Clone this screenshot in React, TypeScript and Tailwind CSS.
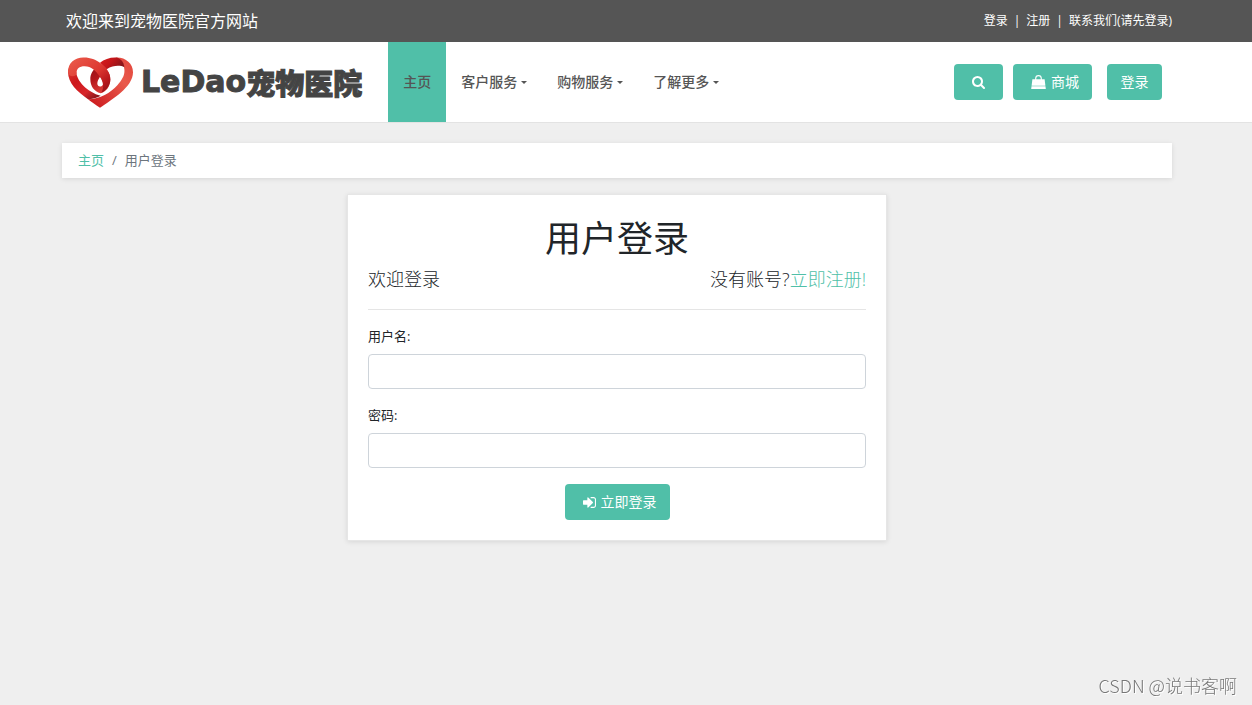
import React, { useState } from "react";

const topLinks = ["登录", "注册", "联系我们(请先登录)"];
const menus = ["客户服务", "购物服务", "了解更多"];

function HeartLogo() {
	return (
		<svg viewBox="24 20 195 152" className="w-[65px] h-[51px]" aria-hidden="true">
			<defs>
				<linearGradient id="left" x1="0" y1="0" x2="0.8" y2="1">
					<stop offset="0" stopColor="#d93a33" />
					<stop offset="0.4" stopColor="#cd171b" />
					<stop offset="0.75" stopColor="#d8262a" />
					<stop offset="1" stopColor="#8b141a" />
				</linearGradient>
				<linearGradient id="right" x1="1" y1="0" x2="0" y2="1">
					<stop offset="0" stopColor="#e2443b" />
					<stop offset="0.35" stopColor="#e95a4c" />
					<stop offset="1" stopColor="#c91319" />
				</linearGradient>
				<linearGradient id="fold" x1="0" y1="0" x2="1" y2="0.4">
					<stop offset="0" stopColor="#d81f20" />
					<stop offset="0.5" stopColor="#c5161a" />
					<stop offset="1" stopColor="#8a1419" />
				</linearGradient>
				<linearGradient id="drop" x1="0" y1="0" x2="0.4" y2="1">
					<stop offset="0" stopColor="#8f131a" />
					<stop offset="0.5" stopColor="#b3161b" />
					<stop offset="1" stopColor="#dc3a36" />
				</linearGradient>
				<linearGradient id="band" x1="0" y1="0" x2="1" y2="1">
					<stop offset="0" stopColor="#ec5d4d" />
					<stop offset="0.55" stopColor="#dc3630" />
					<stop offset="0.8" stopColor="#b5151b" />
					<stop offset="1" stopColor="#7f1218" />
				</linearGradient>
			</defs>
			{/* lower ribbons */}
			<path
				fill="url(#left)"
				d="M24 64C24 50 34 44 48 58C47 92 84 126 122 136C112 142 98 147 84 146C52 124 24 98 24 64Z"
			/>
			<path
				fill="url(#right)"
				d="M120 172C106 162 94 154 84 146C120 146 152 126 172 104C188 86 195 72 193 56C192 40 184 27 166 21C196 19 219 38 219 65C219 110 156 146 120 172Z"
			/>
			{/* fold that turns down into the drop */}
			<path fill="url(#fold)" d="M120 37C133 26 150 20 170 21C184 25 192 36 193 50C180 44 160 44 140 56Z" />
			<path
				fill="url(#drop)"
				fillRule="evenodd"
				d="M116 44C98 58 91 70 91 86C91 106 102 123 122 128C140 123 151 106 151 86C151 66 138 50 116 44ZM120 79C128 88 130 95 129 101C128 106 124 108 120 108C116 108 112 105 112 99C112 93 115 87 120 79Z"
			/>
			{/* upper left ribbon over the top */}
			<path
				fill="url(#band)"
				d="M24 64C24 36 46 20 72 21C92 21 108 28 120 37C142 52 155 74 150 96C146 110 137 121 124 127C133 112 130 94 120 79C107 60 94 47 74 47C58 47 49 54 50 68C51 78 26 84 24 64Z"
			/>
		</svg>
	);
}

function SearchIcon() {
	return (
		<svg viewBox="0 0 1664 1664" className="size-[13px] mr-px" fill="currentColor" aria-hidden="true">
			<path d="M1152 704q0-185-131.5-316.5T704 256 387.5 387.5 256 704t131.5 316.5T704 1152t316.5-131.5T1152 704zm512 832q0 52-38 90t-90 38q-54 0-90-38l-343-342q-179 124-399 124-143 0-273.5-55.5t-225-150-150-225T0 704t55.5-273.5 150-225 225-150T704 0t273.5 55.5 225 150 150 225T1408 704q0 220-124 399l343 343q37 37 37 90z" />
		</svg>
	);
}

function BagIcon() {
	return (
		<svg viewBox="0 0 15 14" className="w-[15px] h-3.5" aria-hidden="true">
			<path d="M4.7 6.6V3.4a2.8 2.8 0 0 1 5.6 0v3.2" fill="none" stroke="currentColor" strokeWidth="1.1" />
			<path d="M1.4 4.2h12.2l.8 6.6H.6z" fill="currentColor" />
			<path d="M.5 11.3h14l.3 2.7H.2z" fill="currentColor" />
		</svg>
	);
}

function SignInIcon() {
	return (
		<svg viewBox="0 256 1536 1280" className="w-[13px] h-[11px]" fill="currentColor" aria-hidden="true">
			<path d="M1184 896q0 26-19 45l-544 544q-19 19-45 19t-45-19-19-45v-288H64q-26 0-45-19t-19-45V704q0-26 19-45t45-19h448V352q0-26 19-45t45-19 45 19l544 544q19 19 19 45zm352-352v704q0 119-84.5 203.5T1248 1536H928q-13 0-22.5-9.5T896 1504q0-4-1-20t-.5-26.5 3-23.5 10-19.5T928 1408h320q66 0 113-47t47-113V544q0-66-47-113t-113-47H936l-11.5-1-11.5-3-8-5.5-7-9-2-13.5q0-4-1-20t-.5-26.5 3-23.5 10-19.5T928 256h320q119 0 203.5 84.5T1536 544z" />
		</svg>
	);
}

export default function App() {
	const [username, setUsername] = useState("");
	const [password, setPassword] = useState("");

	return (
		<div className="min-h-screen bg-[#efefef] text-[#212529] font-['Open_Sans','Noto_Sans_CJK_SC',sans-serif]">
			{/* Top bar */}
			<div className="bg-[#555] text-white pr-[18px]">
				<div className="max-w-[1110px] mx-auto h-[42px] pl-1 flex items-center justify-between">
					<p className="text-base">欢迎来到宠物医院官方网站</p>
					<ul className="flex items-center text-xs">
						{topLinks.map((label, i) => (
							<li key={label} className="flex items-center">
								{i > 0 && <span className="px-1.5">|</span>}
								<a href="#">{label}</a>
							</li>
						))}
					</ul>
				</div>
			</div>

			{/* Navigation */}
			<header className="bg-white border-b border-[#e3e3e3] pr-[18px]">
				<div className="max-w-[1110px] mx-auto h-20 pl-1.5 pr-2.5 flex items-center">
					<a href="#" className="flex items-center gap-2 text-[#444] mr-[26px]">
						<HeartLogo />
						<span className="flex items-center font-black whitespace-nowrap leading-none [-webkit-text-stroke:1px_#444]">
							<span className="text-3xl leading-none font-['DejaVu_Sans',sans-serif]">LeDao</span>
							<span className="text-[29px] leading-none font-['Noto_Sans_CJK_SC',sans-serif]">宠物医院</span>
						</span>
					</a>
					<nav className="h-full flex text-sm font-medium text-[#555]">
						<a href="#" className="flex items-center px-[15px] bg-[#50bfa8]">
							主页
						</a>
						{menus.map((label) => (
							<button key={label} type="button" className="flex items-center gap-1 px-[15px]">
								{label}
								<span className="border-x-[3px] border-t-[3px] border-x-transparent border-t-[#555]" />
							</button>
						))}
					</nav>
					<div className="ml-auto flex items-center text-sm text-white">
						<button
							type="button"
							aria-label="搜索"
							className="w-[49px] h-9 mr-2.5 rounded bg-[#50bfa8] flex items-center justify-center"
						>
							<SearchIcon />
						</button>
						<a href="#" className="h-9 mr-[15px] pl-[18px] pr-[13px] rounded bg-[#50bfa8] flex items-center gap-[5px]">
							<BagIcon />
							商城
						</a>
						<button type="button" className="w-[55px] h-9 rounded bg-[#50bfa8]">
							登录
						</button>
					</div>
				</div>
			</header>

			<main className="pr-[18px]">
				<div className="max-w-[1110px] mx-auto pt-5">
					<nav
						aria-label="breadcrumb"
						className="h-[35px] px-4 bg-white shadow-[0_1px_5px_rgba(0,0,0,0.1)] flex items-center text-[13px] text-[#6c757d]"
					>
						<a href="#" className="text-[#50bfa8]">
							主页
						</a>
						<span className="px-2">/</span>
						<span>用户登录</span>
					</nav>

					{/* Login card */}
					<section className="max-w-[540px] mx-auto mt-4 p-5 bg-white border border-[#e6e6e6] shadow-[0_1px_5px_rgba(0,0,0,0.1)]">
						<h1 className="text-4xl leading-[48px] text-center">用户登录</h1>
						<div className="flex justify-between pb-3.5 border-b border-[#e5e5e5] text-lg leading-8 font-light">
							<p>欢迎登录</p>
							<p>
								没有账号?
								<a href="#" className="text-[#50bfa8]">
									立即注册!
								</a>
							</p>
						</div>
						<form onSubmit={(e) => e.preventDefault()} className="pt-4 text-[13px]">
							<div className="mb-4">
								<label htmlFor="username" className="block mb-2 leading-5">
									用户名:
								</label>
								<input
									id="username"
									type="text"
									value={username}
									onChange={(e) => setUsername(e.target.value)}
									className="block w-full h-[35px] px-3 rounded border border-[#ced4da] bg-white"
								/>
							</div>
							<div className="mb-4">
								<label htmlFor="password" className="block mb-2 leading-5">
									密码:
								</label>
								<input
									id="password"
									type="password"
									value={password}
									onChange={(e) => setPassword(e.target.value)}
									className="block w-full h-[35px] px-3 rounded border border-[#ced4da] bg-white"
								/>
							</div>
							<button
								type="submit"
								className="h-9 mx-auto pl-[18px] pr-[13px] rounded bg-[#50bfa8] text-white text-sm flex items-center gap-[5px]"
							>
								<SignInIcon />
								立即登录
							</button>
						</form>
					</section>
				</div>
			</main>

			<p className="fixed right-[15px] bottom-1.5 text-lg font-light text-[#777] [text-shadow:1px_1px_0_#fff] font-['Noto_Sans_CJK_SC',sans-serif]">
				CSDN @说书客啊
			</p>
		</div>
	);
}
